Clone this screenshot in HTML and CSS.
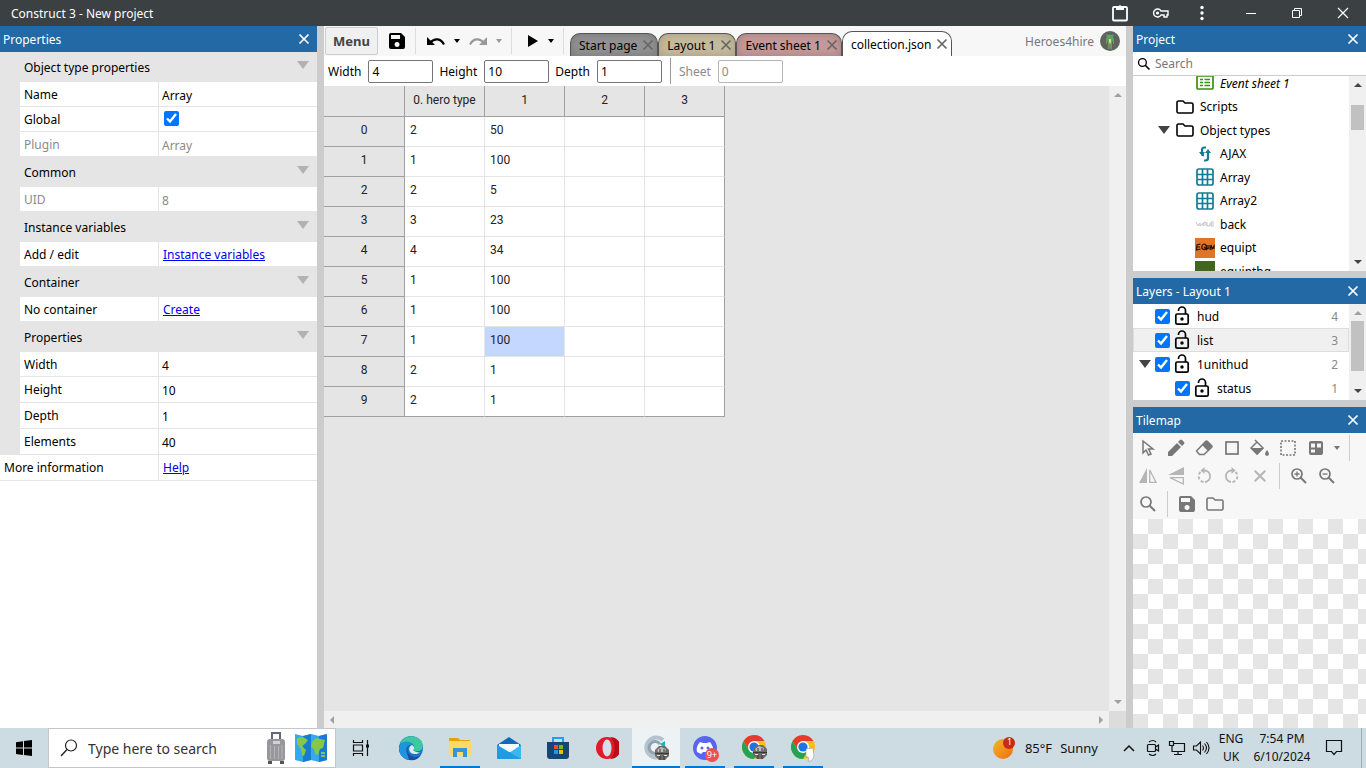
FILE: index.html
```html
<!DOCTYPE html>
<html lang="en">
<head>
  <meta charset="UTF-8">
  <title>Construct 3 - New project</title>
  <meta name="viewport" content="width=device-width, initial-scale=1.0">
  <link rel="stylesheet" href="styles.css">
</head>
<body>
  <svg class="symbols" width="0" height="0" aria-hidden="true">
    <symbol id="close" viewBox="0 0 12 12"><path d="M1.500 1.500l9 9m0-9l-9 9" fill="none" stroke="currentColor" stroke-width="1.700"/></symbol>
    <symbol id="down" viewBox="0 0 12 12"><path d="M0 2h12l-6 8z" fill="currentColor"/></symbol>
    <symbol id="save" viewBox="0 0 18 18"><path d="M3 1h10l4 4v10a2 2 0 0 1-2 2H3a2 2 0 0 1-2-2V3a2 2 0 0 1 2-2zm0 2v4h9V3zm6 7a2.500 2.500 0 1 0 .1 0z" fill="currentColor" fill-rule="evenodd"/></symbol>
    <symbol id="folder" viewBox="0 0 18 18"><path d="M1 4.500a1.500 1.500 0 0 1 1.500-1.500H7l2 2h6.500A1.500 1.500 0 0 1 17 6.500v7a1.500 1.500 0 0 1-1.500 1.500h-13A1.500 1.500 0 0 1 1 13.500z" fill="none" stroke="currentColor" stroke-width="1.600"/></symbol>
    <symbol id="undo" viewBox="0 0 20 14"><path d="M1 3l8 8H1z" fill="currentColor"/><path d="M4.500 8.500c4-5 10.500-4 13.500 2" fill="none" stroke="currentColor" stroke-width="2.200"/></symbol>
    <symbol id="lock" viewBox="0 0 16 20"><rect x="1.800" y="8" width="12.400" height="10.200" rx="1.500" fill="none" stroke="currentColor" stroke-width="1.700"/><path d="M4.500 5V4.500a3.500 3.500 0 0 1 7 0V8" fill="none" stroke="currentColor" stroke-width="1.700"/><circle cx="8" cy="13" r="1.700" fill="currentColor"/></symbol>
    <symbol id="array" viewBox="0 0 18 18"><rect x="1" y="1" width="16" height="16" rx="2" fill="none" stroke="currentColor" stroke-width="1.700"/><path d="M6.500 1v16M11.500 1v16M1 6.500h16M1 11.500h16" stroke="currentColor" stroke-width="1.700"/></symbol>
    <symbol id="zoom" viewBox="0 0 18 18"><circle cx="7" cy="7" r="5" fill="none" stroke="currentColor" stroke-width="1.700"/><path d="M10.500 10.500l5.500 5.500" stroke="currentColor" stroke-width="2"/></symbol>
    <symbol id="rotate" viewBox="0 0 18 18"><path d="M8 3.500h2a5.800 5.800 0 0 1 0 11.500" fill="none" stroke="currentColor" stroke-width="1.800"/><path d="M8.500 15A5.800 5.800 0 0 1 5.500 5" fill="none" stroke="currentColor" stroke-width="1.800" stroke-dasharray="3 2"/><path d="M9.500 0v7L5.500 3.500z" fill="currentColor"/></symbol>
    <symbol id="chrome" viewBox="0 0 26 26"><circle cx="13" cy="13" r="12" fill="#fbc116"/><path d="M2.600 7A12 12 0 0 1 23.400 7H13l-5.200 9z" fill="#e33b2e"/><path d="M2.600 7A12 12 0 0 0 13 25l5.200-9H7.800z" fill="#23a455"/><circle cx="13" cy="13" r="6" fill="#fff"/><circle cx="13" cy="13" r="4.600" fill="#1a73e8"/></symbol>
    <symbol id="robot" viewBox="0 0 16 16"><path d="M1 5l4-4h6l4 4v6l-4 4H5l-4-4z" fill="#6d6a68"/><path d="M3 5l4-3 5 2-1 3H4z" fill="#bdbdbd"/><path d="M1 8.500h14M6 4v3M10 4v3M6 11v4M10 11v4" stroke="#3a3735"/><path d="M3 10.500h3m4 0h3" stroke="#ddd"/></symbol>
  </svg>

  <header class="titlebar">
    <span class="app-name">Construct 3 - New project</span>
    <button aria-label="Clipboard"><svg width="18" height="18" viewBox="0 0 18 18"><rect x="2" y="3" width="14" height="13.500" rx="1" fill="none" stroke="currentColor" stroke-width="1.800"/><path d="M5 2h2.500a1.800 1.800 0 0 1 3 0H13v4H5z" fill="currentColor"/></svg></button>
    <button aria-label="Passwords"><svg width="18" height="12" viewBox="0 0 18 12"><path d="M9 4a4 4 0 1 0 0 4h3v2h3V8h1V4z" fill="none" stroke="currentColor" stroke-width="1.400"/><circle cx="5.500" cy="6" r="1.600" fill="currentColor"/></svg></button>
    <button aria-label="More"><svg width="6" height="16" viewBox="0 0 6 16" fill="currentColor"><circle cx="3" cy="2.500" r="1.700"/><circle cx="3" cy="8" r="1.700"/><circle cx="3" cy="13.500" r="1.700"/></svg></button>
    <button class="win" aria-label="Minimize"><svg width="12" height="12"><path d="M1 6.500h10" stroke="currentColor"/></svg></button>
    <button class="win" aria-label="Restore"><svg width="12" height="12" fill="none" stroke="currentColor"><path d="M1.500 3.500h7v7h-7zM3.500 3.500v-2h7v7h-2"/></svg></button>
    <button class="win" aria-label="Close"><svg width="12" height="12"><path d="M1 1l10 10m0-10L1 11" stroke="currentColor" stroke-width="1.200"/></svg></button>
  </header>

  <div class="workspace">
    <aside class="properties">
      <div class="panel-head"><h2>Properties</h2><button aria-label="Close properties"><svg width="12" height="12"><use href="#close"/></svg></button></div>
      <div class="prop-groups">
        <div class="group">Object type properties <svg width="12" height="12"><use href="#down"/></svg></div>
        <div class="prop"><label for="p-name">Name</label><input id="p-name" type="text" value="Array"></div>
        <div class="prop"><label for="p-global">Global</label><span class="tick"><input id="p-global" type="checkbox" checked></span></div>
        <div class="prop off"><label for="p-plugin">Plugin</label><input id="p-plugin" type="text" value="Array" disabled></div>
        <div class="group">Common <svg width="12" height="12"><use href="#down"/></svg></div>
        <div class="prop off"><label for="p-uid">UID</label><input id="p-uid" type="text" value="8" disabled></div>
        <div class="group">Instance variables <svg width="12" height="12"><use href="#down"/></svg></div>
        <div class="prop"><span class="name">Add / edit</span><a href="#">Instance variables</a></div>
        <div class="group">Container <svg width="12" height="12"><use href="#down"/></svg></div>
        <div class="prop"><span class="name">No container</span><a href="#">Create</a></div>
        <div class="group">Properties <svg width="12" height="12"><use href="#down"/></svg></div>
        <div class="prop"><label for="p-width">Width</label><input id="p-width" type="text" value="4"></div>
        <div class="prop tall"><label for="p-height">Height</label><input id="p-height" type="text" value="10"></div>
        <div class="prop tall"><label for="p-depth">Depth</label><input id="p-depth" type="text" value="1"></div>
        <div class="prop tall"><label for="p-elements">Elements</label><input id="p-elements" type="text" value="40"></div>
      </div>
      <div class="prop tall more"><span class="name">More information</span><a href="#">Help</a></div>
    </aside>

    <main class="editor">
      <div class="toolbar">
        <button class="menu">Menu</button>
        <button class="save" aria-label="Save"><svg width="18" height="18"><use href="#save"/></svg></button>
        <div class="tool-group history">
          <button aria-label="Undo"><svg width="20" height="14"><use href="#undo"/></svg></button>
          <button aria-label="Undo list"><svg width="6" height="6"><use href="#down"/></svg></button>
          <button class="dim" aria-label="Redo"><svg class="flip" width="20" height="14"><use href="#undo"/></svg></button>
          <button class="dim" aria-label="Redo list"><svg width="6" height="6"><use href="#down"/></svg></button>
        </div>
        <div class="tool-group preview">
          <button aria-label="Preview"><svg width="10" height="12"><path d="M0 0v12l10-6z"/></svg></button>
          <button aria-label="Preview options"><svg width="6" height="6"><use href="#down"/></svg></button>
        </div>
        <div class="tabs">
          <div class="tab start"><a href="#">Start page</a><button aria-label="Close tab"><svg width="12" height="12"><use href="#close"/></svg></button></div>
          <div class="tab layout"><a href="#">Layout 1</a><button aria-label="Close tab"><svg width="12" height="12"><use href="#close"/></svg></button></div>
          <div class="tab event"><a href="#">Event sheet 1</a><button aria-label="Close tab"><svg width="12" height="12"><use href="#close"/></svg></button></div>
          <div class="tab current"><a href="#">collection.json</a><button aria-label="Close tab"><svg width="12" height="12"><use href="#close"/></svg></button></div>
        </div>
        <a class="user" href="#">Heroes4hire
          <svg width="20" height="20" viewBox="0 0 20 20"><circle cx="10" cy="10" r="10" fill="#5f625f"/><path d="M6 3l2 1q2-1 4 0l2-1-1 3 1 2v5h-1V9l-1 3v6h-1.500L10 13l-.5 5H8v-6L7 9v4H6V8l1-2z" fill="#5fa35f"/><path d="M9 8h2v3l-1 2-1-2z" fill="#e6cfae"/><path d="M8 12h1v3H8zM11 12h1v3h-1z" fill="#a8795c"/></svg>
        </a>
      </div>

      <form class="size-bar">
        <label for="a-width">Width</label><input id="a-width" type="text" value="4">
        <label for="a-height">Height</label><input id="a-height" type="text" value="10">
        <label for="a-depth">Depth</label><input id="a-depth" type="text" value="1">
        <span class="rule"></span>
        <label class="off" for="a-sheet">Sheet</label><input id="a-sheet" type="text" value="0" disabled>
      </form>

      <div class="grid-area">
        <div class="grid-scroll">
          <table>
            <colgroup><col class="index"><col><col><col><col></colgroup>
            <thead>
              <tr><th></th><th>0. hero type</th><th>1</th><th>2</th><th>3</th></tr>
            </thead>
            <tbody>
              <tr><th>0</th><td>2</td><td>50</td><td></td><td></td></tr>
              <tr><th>1</th><td>1</td><td>100</td><td></td><td></td></tr>
              <tr><th>2</th><td>2</td><td>5</td><td></td><td></td></tr>
              <tr><th>3</th><td>3</td><td>23</td><td></td><td></td></tr>
              <tr><th>4</th><td>4</td><td>34</td><td></td><td></td></tr>
              <tr><th>5</th><td>1</td><td>100</td><td></td><td></td></tr>
              <tr><th>6</th><td>1</td><td>100</td><td></td><td></td></tr>
              <tr><th>7</th><td>1</td><td class="selected">100</td><td></td><td></td></tr>
              <tr><th>8</th><td>2</td><td>1</td><td></td><td></td></tr>
              <tr><th>9</th><td>2</td><td>1</td><td></td><td></td></tr>
            </tbody>
          </table>
        </div>
        <div class="vbar idle"><i class="up"></i><i class="dn"></i></div>
        <div class="hbar"><i class="lt"></i><i class="rt"></i></div>
        <div class="corner"></div>
      </div>
    </main>

    <aside class="side">
      <section class="project">
        <div class="panel-head"><h2>Project</h2><button aria-label="Close project"><svg width="12" height="12"><use href="#close"/></svg></button></div>
        <div class="search"><svg width="14" height="14"><use href="#zoom" width="14" height="14"/></svg><input type="text" placeholder="Search" aria-label="Search"></div>
        <div class="scroller">
          <ul class="tree">
            <li class="deep"><svg class="green" width="18" height="18" viewBox="0 0 18 18"><rect x="1" y="2" width="16" height="13" rx="1" fill="none" stroke="currentColor" stroke-width="1.700"/><path d="M4 5.500h3m1.500 0H14M4 8.500h3m1.500 0H14M4 11.500h3m1.500 0H14" stroke="currentColor" stroke-width="1.600"/></svg><em>Event sheet 1</em></li>
            <li><svg width="18" height="18"><use href="#folder"/></svg>Scripts</li>
            <li class="open"><svg class="arrow" width="12" height="12"><use href="#down"/></svg><svg width="18" height="18"><use href="#folder"/></svg>Object types</li>
            <li class="deep"><svg class="teal" width="18" height="18" viewBox="0 0 18 18"><path d="M10 2.500H8.500Q6 2.500 6 5v3q0 2 2 2.500M8 15.500h1.500q2.500 0 2.500-2.500V7" fill="none" stroke="currentColor" stroke-width="2.200"/><path d="M3 7h6l-3 4zM9 8h6l-3-4z" fill="currentColor"/></svg>AJAX</li>
            <li class="deep"><svg class="teal" width="18" height="18"><use href="#array"/></svg>Array</li>
            <li class="deep"><svg class="teal" width="18" height="18"><use href="#array"/></svg>Array2</li>
            <li class="deep"><svg width="18" height="18" viewBox="0 0 18 18" fill="none" stroke="#c4c4c4"><path d="M0 7l2 4 2-3m0 0v3l3-3v3m1 0V7l2 1v3m1-4v4h3V8m1 3V7h3m-3 2h3m-3 2h3"/></svg>back</li>
            <li class="deep"><svg class="sprite" width="20" height="20" viewBox="0 0 20 20"><path fill="#e27525" d="M0 0h20v20H0z"/><path d="M5.500 6L2 7l-.5 5 4-1M2 9h3m4-3c-3 1-3 5 0 5.500s3-5.500 0-5.500m0 3l3 3m0-5v4l2-1V7m1 5l1-5 1 4 2-3v3" fill="none" stroke="#241208" stroke-width="1.200"/></svg>equipt</li>
            <li class="deep"><svg class="sprite" width="20" height="20"><path fill="#42651f" d="M0 0h20v20H0z"/></svg>equiptbg</li>
          </ul>
          <div class="vbar"><i class="up"></i><b></b><i class="dn"></i></div>
        </div>
      </section>

      <section class="layers">
        <div class="panel-head"><h2>Layers - Layout 1</h2><button aria-label="Close layers"><svg width="12" height="12"><use href="#close"/></svg></button></div>
        <div class="scroller">
          <ul class="layer-list">
            <li><input id="l4" type="checkbox" checked><svg width="16" height="20"><use href="#lock"/></svg><label for="l4">hud</label><span>4</span></li>
            <li class="active"><input id="l3" type="checkbox" checked><svg width="16" height="20"><use href="#lock"/></svg><label for="l3">list</label><span>3</span></li>
            <li class="open"><svg class="arrow" width="12" height="12"><use href="#down"/></svg><input id="l2" type="checkbox" checked><svg width="16" height="20"><use href="#lock"/></svg><label for="l2">1unithud</label><span>2</span></li>
            <li class="child"><input id="l1" type="checkbox" checked><svg width="16" height="20"><use href="#lock"/></svg><label for="l1">status</label><span>1</span></li>
          </ul>
          <div class="vbar top"><i class="up"></i><b></b><i class="dn"></i></div>
        </div>
      </section>

      <section class="tilemap">
        <div class="panel-head"><h2>Tilemap</h2><button aria-label="Close tilemap"><svg width="12" height="12"><use href="#close"/></svg></button></div>
        <div class="tile-tools">
          <div class="tile-row">
            <button aria-label="Select"><svg width="18" height="18" viewBox="0 0 18 18"><path d="M4 2v12l3-3 2.500 5 2.500-1-2.500-5H14z" fill="none" stroke="currentColor" stroke-width="1.500"/></svg></button>
            <button aria-label="Draw"><svg width="18" height="18" viewBox="0 0 18 18" fill="currentColor"><path d="M1 17v-4l9-9 4 4-9 9zM11 3l2-2q1-1 2 0l2 2q1 1 0 2l-2 2z"/></svg></button>
            <button aria-label="Erase"><svg width="18" height="18" viewBox="0 0 18 18"><path d="M7 6l4.500-4 5.500 5-4 5z" fill="currentColor"/><path d="M1.500 12l9-9.500q1-1 2 0l4 4q1 1 0 2L9 15.500H4.500z" fill="none" stroke="currentColor" stroke-width="1.500"/></svg></button>
            <button aria-label="Rectangle"><svg width="18" height="18"><rect x="3" y="3" width="12" height="12" fill="none" stroke="currentColor" stroke-width="1.700"/></svg></button>
            <button aria-label="Fill"><svg width="20" height="18" viewBox="0 0 20 18"><path d="M5 1l8 8-6 6-6-6 6-6" fill="none" stroke="currentColor" stroke-width="1.500"/><path d="M1 9h13l-7 7zM17 11q-4 5 0 6 4-1 0-6z" fill="currentColor"/></svg></button>
            <button aria-label="Selection"><svg width="18" height="18"><rect x="2" y="2" width="14" height="14" fill="none" stroke="currentColor" stroke-width="1.600" stroke-dasharray="2 1.500"/></svg></button>
            <button aria-label="Tiles"><svg width="18" height="18" viewBox="0 0 18 18"><path d="M4 2h10a2 2 0 0 1 2 2v10a2 2 0 0 1-2 2H4a2 2 0 0 1-2-2V4a2 2 0 0 1 2-2zm0 2.500v4h4v-4zm6 0v4h4v-4zm-6 6v3h4v-3z" fill="currentColor" fill-rule="evenodd"/></svg></button>
            <button class="small" aria-label="Tile options"><svg width="6" height="6"><use href="#down"/></svg></button>
            <span class="rule"></span>
          </div>
          <div class="tile-row">
            <button class="dim" aria-label="Mirror"><svg width="18" height="18" viewBox="0 0 18 18"><path d="M8 1v15H0z" fill="currentColor"/><path d="M10.700 3v12.300H17z" fill="none" stroke="currentColor" stroke-width="1.300"/></svg></button>
            <button class="dim" aria-label="Flip"><svg width="18" height="18" viewBox="0 0 18 18"><path d="M17 0v8H1z" fill="currentColor"/><path d="M3 10.700h13.300V17z" fill="none" stroke="currentColor" stroke-width="1.300"/></svg></button>
            <button class="dim" aria-label="Rotate left"><svg width="18" height="18"><use href="#rotate"/></svg></button>
            <button class="dim" aria-label="Rotate right"><svg class="flip" width="18" height="18"><use href="#rotate"/></svg></button>
            <button class="dim" aria-label="Clear"><svg width="14" height="14"><use href="#close"/></svg></button>
            <span class="rule"></span>
            <button aria-label="Zoom in"><svg width="18" height="18"><use href="#zoom"/><path d="M4.500 7h5M7 4.500v5" stroke="currentColor" stroke-width="1.300"/></svg></button>
            <button aria-label="Zoom out"><svg width="18" height="18"><use href="#zoom"/><path d="M4.500 7h5" stroke="currentColor" stroke-width="1.300"/></svg></button>
          </div>
          <div class="tile-row">
            <button aria-label="Reset zoom"><svg width="18" height="18"><use href="#zoom"/></svg></button>
            <span class="rule"></span>
            <button aria-label="Save tiles"><svg width="18" height="18"><use href="#save"/></svg></button>
            <button aria-label="Load tiles"><svg width="18" height="18"><use href="#folder"/></svg></button>
          </div>
        </div>
        <div class="checker"></div>
      </section>
    </aside>
  </div>

  <footer class="taskbar">
    <button class="start-btn" aria-label="Start"><svg width="16" height="16" viewBox="0 0 16 16"><path d="M0 2.200l7-1v6.300H0zM8 1.100L16 0v7.500H8zM0 8.500h7v6.400l-7-1zM8 8.500h8V16l-8-1.100z"/></svg></button>
    <div class="find">
      <svg width="18" height="18" viewBox="0 0 18 18"><circle cx="11" cy="6.500" r="5.500" fill="none" stroke="#222" stroke-width="1.200"/><path d="M7 10.500L1 17" stroke="#222" stroke-width="1.400"/></svg>
      <input type="text" placeholder="Type here to search" aria-label="Type here to search">
      <svg width="20" height="32" viewBox="0 0 20 32"><path d="M6 8V1h8v7" fill="none" stroke="#66667a" stroke-width="2"/><rect x="1" y="7" width="18" height="22" rx="3" fill="#98989c"/><path d="M4.500 13v14M8.500 14v13M12.500 14v13M16 13v14" stroke="#b4b4b8"/><path d="M7 9h7v3H7z" fill="#d8cdd8"/><path d="M2 29h4v3H2zM14 29h4v3h-4z" fill="#555"/></svg>
      <svg width="34" height="30" viewBox="0 0 34 30"><path d="M1 1l8 2 8-2 8 2 8-2v26l-8 2-8-2-8 2-8-2z" fill="#36a9ee"/><path d="M9 3l8-2v26l-8 2zM25 3l8-2v26l-8 2z" fill="#177bd0"/><path d="M3 5l6-1 5 3-3 4-3 2 4 4-2 6-2-1-1-6-4-5zM18 9l4-4 9 2-2 8-3 1-2 6-3-1-1-5-3-2z" fill="#83c846"/><path d="M27 19h4v2h-4zM27 22h4v2h-4z" fill="#83c846"/></svg>
    </div>
    <nav class="apps">
      <button aria-label="Task view"><svg width="18" height="16" viewBox="0 0 18 16" fill="none" stroke="#111" stroke-width="1.200"><path d="M1.500 0v2.500h9V0M1.500 5h9v6h-9zM1.500 16v-2.500h9V16M15.500 0v16"/><path d="M14 4.500h3v3h-3z" fill="#111" stroke="none"/></svg></button>
      <button aria-label="Edge"><svg width="26" height="26" viewBox="0 0 26 26"><circle cx="13" cy="13" r="12" fill="#1575ca"/><path d="M2 10C4 2 12 0 18 2c6 2 8 8 6 12-2 3-8 3-9 0 3-3-1-7-5-7-4 0-7 1-8 3z" fill="#3cc8a0"/><path d="M1 14C1 8 8 5 13 10c-4 1-5 5-2 9 3 4 8 4 12 1-5 9-21 6-22-6z" fill="#174f9b"/><path d="M1 13C2 6 11 4 15 10c-5-1-8 3-6 8l2 7C4 24 1 18 1 13z" fill="#2093df"/><path d="M14 10c-3 1-4 5-1 8 3 2 7 1 10-1-2 1-6 0-8-2 2-1 1-4-1-5z" fill="#dcebf2"/></svg></button>
      <button class="running" aria-label="Files"><svg width="24" height="22" viewBox="0 0 24 22"><path d="M1 1h9l2 2h10v16H1z" fill="#e2a30c"/><path d="M1 4h22v15H1z" fill="#ffd968"/><path d="M5 20V11h14v9h-4v-5H9v5z" fill="#3694dc"/></svg></button>
      <button aria-label="Mail"><svg width="26" height="24" viewBox="0 0 26 24"><path d="M1 9L13 1l12 8v14H1z" fill="#116abb"/><path d="M3 8h20v8H3z" fill="#f6fbff"/><path d="M1 9l12 8 12-8v14H1z" fill="#36b8f0"/><path d="M1 9l24 14H1z" fill="#1e9be2"/></svg></button>
      <button aria-label="Store"><svg width="24" height="24" viewBox="0 0 24 24"><path d="M7 7V2h10v5" fill="none" stroke="#24a0e7" stroke-width="2"/><path d="M1 6h22v14q0 3-3 3H4q-3 0-3-3z" fill="#194575"/><path d="M8 9h4v4H8z" fill="#f25022"/><path d="M13 9h4v4h-4z" fill="#7fba00"/><path d="M8 14h4v4H8z" fill="#00a4ef"/><path d="M13 14h4v4h-4z" fill="#ffb900"/></svg></button>
      <button aria-label="Opera"><svg width="24" height="24" viewBox="0 0 24 24"><circle cx="12" cy="12" r="11" fill="#e31a2a"/><path d="M15 1a11 11 0 0 1 0 22c6-4 6-18 0-22z" fill="#b80e19"/><ellipse cx="12" cy="12" rx="4.500" ry="8.500" fill="#d3e0e7"/></svg></button>
      <button class="running current" aria-label="Construct"><svg width="28" height="28" viewBox="0 0 28 28"><path d="M21 6a10 10 0 1 0 0 15" fill="none" stroke="#b4c2ce" stroke-width="4"/><path d="M18 10a6 6 0 1 0 0 7" fill="none" stroke="#8fa3b4" stroke-width="3"/><path d="M23 7v8l-5-5z" fill="#18b9b3"/><use href="#robot" x="12" y="11" width="16" height="16"/></svg></button>
      <button class="running" aria-label="Discord"><svg width="26" height="26" viewBox="0 0 26 26"><circle cx="13" cy="13" r="12" fill="#5865f2"/><path d="M8 7l3 1h4l3-1c3 4 4 8 3 10l-4 2-2-2h-4l-2 2-4-2c-1-3 0-7 3-10z" fill="#fff"/><circle cx="10" cy="13" r="1.500" fill="#5865f2"/><circle cx="16" cy="13" r="1.500" fill="#5865f2"/></svg><span class="badge">9+</span></button>
      <button class="running" aria-label="Chrome"><svg width="28" height="28" viewBox="0 0 28 28"><use href="#chrome" x="1" width="26" height="26"/><use href="#robot" x="12" y="10" width="16" height="16"/></svg></button>
      <button class="running" aria-label="Chrome profile"><svg width="28" height="28" viewBox="0 0 28 28"><use href="#chrome" x="1" width="26" height="26"/><path d="M17 15l7-1 1 9-3 4h-3l1-3-3-2z" fill="#fff" stroke="#8a8a8a" stroke-width=".5"/></svg></button>
    </nav>
    <div class="tray">
      <button class="weather"><svg width="24" height="24" viewBox="0 0 24 24"><defs><linearGradient id="sun" x1="0" y1="0" x2="1" y2="1"><stop offset="0" stop-color="#efb92a"/><stop offset="1" stop-color="#f26c0d"/></linearGradient></defs><circle cx="10" cy="13" r="10" fill="url(#sun)"/><circle cx="16" cy="7" r="6" fill="#c42b1c"/></svg><span class="alert">1</span><span>85°F</span><span>Sunny</span></button>
      <button class="sys" aria-label="Hidden icons"><svg width="14" height="14"><path d="M2 10l5-5 5 5" fill="none" stroke="#111" stroke-width="1.500"/></svg></button>
      <button class="sys" aria-label="Meet now"><svg width="14" height="18" fill="none" stroke="#111" stroke-width="1.200"><path d="M3 3q4-3 7 0M3 15q4 3 7 0M1.500 6.500q0-1 1-1h6q1 0 1 1v5q0 1-1 1h-6q-1 0-1-1zM9.500 8l3-2v6l-3-2"/></svg></button>
      <button class="sys" aria-label="Network"><svg width="18" height="16" fill="none" stroke="#111" stroke-width="1.200"><path d="M5 3.500h11.500v8H4V6M10 12v3M6 14.500h8M1.500 1.500h4v4h-4z"/></svg></button>
      <button class="sys" aria-label="Volume"><svg width="18" height="16" fill="none" stroke="#111" stroke-width="1.100"><path d="M1.500 6h3l4-4v12l-4-4h-3zM10.500 5.500q2 2.500 0 5M12.500 3.500q4 4.500 0 9M14.500 2q5 6 0 12"/></svg></button>
      <button class="lang">ENG<br>UK</button>
      <button class="clock">7:54 PM<br>6/10/2024</button>
      <button class="note" aria-label="Notifications"><svg width="18" height="18"><path d="M1.500 1.500h15v11h-5l-2.500 3-2.500-3h-5z" fill="none" stroke="#111" stroke-width="1.200"/></svg></button>
    </div>
  </footer>
</body>
</html>
```
FILE: styles.css
```css
* {
  margin: 0;
  padding: 0;
  box-sizing: border-box;
}

body {
  font-family: "Noto Sans", sans-serif;
  font-size: 12px;
  color: #111;
  background-color: #ccc;
  display: flex;
  flex-direction: column;
  height: 100vh;
  overflow: hidden;
}

button {
  border: none;
  background: none;
  font: inherit;
  color: inherit;
  display: flex;
  align-items: center;
  justify-content: center;
}

input {
  font: inherit;
  color: inherit;
  border: none;
  min-width: 0;
}

input[type="checkbox"] {
  width: 15px;
  height: 15px;
  accent-color: #0075ff;
  flex: none;
}

svg {
  flex: none;
  display: block;
}

ul {
  list-style: none;
}

.symbols {
  position: absolute;
}

.flip {
  transform: scaleX(-1);
}

/* title bar */
.titlebar {
  flex: none;
  height: 26px;
  display: flex;
  align-items: center;
  background-color: #3b4043;
  color: #fff;
}

.app-name {
  flex: 1;
  padding-left: 11px;
}

.titlebar button {
  width: 41px;
  height: 26px;
}

.titlebar .win {
  width: 46px;
}

.titlebar .win:nth-of-type(4) {
  margin-left: 6px;
}

/* panels */
.workspace {
  flex: 1;
  min-height: 0;
  display: flex;
  gap: 7px;
}

.panel-head {
  flex: none;
  height: 26px;
  padding: 0 7px 0 3px;
  display: flex;
  align-items: center;
  justify-content: space-between;
  background-color: #2269a6;
  color: #fff;
}

h2 {
  font-size: 12px;
  font-weight: normal;
}

/* properties */
.properties {
  width: 317px;
  flex: none;
  background-color: #fff;
}

.prop-groups {
  padding-left: 20px;
  background-color: #e5e5e5;
}

.group {
  height: 30px;
  padding: 0 8px 0 4px;
  display: flex;
  align-items: center;
  justify-content: space-between;
  color: #000;
}

.group svg {
  color: #b2b2b2;
  margin-bottom: 4px;
}

.prop {
  height: 25px;
  display: grid;
  grid-template-columns: 139px 1fr;
  align-items: stretch;
  line-height: 25px;
  background-color: #fff;
  border-bottom: 1px solid #e5e5e5;
  color: #000;
}

.prop.tall {
  height: 26px;
}

.prop.more {
  grid-template-columns: 159px 1fr;
}

.prop label, .prop .name {
  height: 24px;
  padding-left: 4px;
  border-right: 1px solid #e5e5e5;
}

.prop.tall label, .prop.tall .name {
  height: 25px;
}

.prop input[type="text"], .prop a, .tick {
  padding-left: 3px;
  background: none;
}

.prop input[type="text"] {
  padding-top: 1px;
}

.prop a {
  padding-left: 4px;
}

.tick input {
  display: block;
  margin: 4px 0 0 2px;
}

.prop.off {
  color: #8a8a8a;
}

a {
  color: #0000ee;
}

/* editor */
.editor {
  flex: 1;
  min-width: 0;
  display: flex;
  flex-direction: column;
}

.toolbar {
  flex: none;
  height: 30px;
  display: flex;
  background-color: #f7f7f7;
  color: #000;
}

.menu {
  width: 53px;
  height: 28px;
  margin: 1px 0 0 1px;
  border: 1px solid #ccc;
  border-radius: 2px;
  background-color: #f0f0f0;
  color: #444;
  font-weight: bold;
  font-size: 13px;
}

.save {
  width: 37px;
}

.tool-group {
  height: 26px;
  margin-top: 2px;
  display: flex;
  border-left: 1px solid #ddd;
}

.history {
  gap: 8px;
  padding: 0 9px 0 10px;
}

.preview {
  gap: 10px;
  padding: 0 9px 0 16px;
  border-right: 1px solid #ddd;
}

.history .dim {
  color: #999;
}

.tabs {
  flex: 1;
  display: flex;
  align-items: flex-end;
  padding-left: 6px;
}

.tab {
  height: 23px;
  padding: 0 3px 0 8px;
  display: flex;
  align-items: center;
  gap: 5px;
  border: 1px solid #555;
  border-bottom: none;
  border-radius: 10px 10px 0 0;
}

.tab a {
  color: #000;
  text-decoration: none;
}

.tab button {
  color: #666;
}

.tab.start {
  background-color: #929292;
  box-shadow: inset 0 0 10px #777;
}

.tab.layout {
  background-color: #c5bb9d;
  box-shadow: inset 0 0 10px #a79d7d;
}

.tab.event {
  background-color: #c59a9a;
  box-shadow: inset 0 0 10px #a67d7d;
}

.tab.current {
  height: 25px;
  background-color: #fff;
}

.user {
  display: flex;
  align-items: center;
  gap: 6px;
  padding-right: 6px;
  color: #777;
  text-decoration: none;
}

.size-bar {
  flex: none;
  height: 30px;
  display: flex;
  align-items: center;
  padding-left: 4px;
  background-color: #fff;
  color: #000;
}

.size-bar label {
  margin-right: 7px;
}

.size-bar input {
  width: 65px;
  height: 23px;
  padding-left: 3px;
  margin-right: 6px;
  border: 1px solid #767676;
  border-radius: 2px;
  background-color: #fff;
}

.size-bar .off, .size-bar input:disabled {
  color: #8a8a8a;
}

.size-bar input:disabled {
  border-color: #b5b5b5;
}

.size-bar .rule {
  width: 1px;
  height: 26px;
  margin: 0 8px 0 2px;
  background-color: #999;
}

.grid-area {
  flex: 1;
  min-height: 0;
  display: grid;
  grid-template-columns: 1fr 17px;
  grid-template-rows: 1fr 17px;
  background-color: #e5e5e5;
}

.grid-scroll {
  overflow: hidden;
}

table {
  width: 401px;
  table-layout: fixed;
  border-collapse: separate;
  border-spacing: 0;
  font-family: Roboto, sans-serif;
  color: #222;
}

.index {
  width: 81px;
}

th, td {
  height: 30px;
  font-weight: normal;
  line-height: 16px;
  padding-bottom: 3px;
}

th {
  background-color: #e5e5e5;
  border-right: 1px solid #a0a0a0;
  border-bottom: 1px solid #a0a0a0;
  text-align: center;
}

thead th {
  height: 31px;
}

td {
  padding-left: 5px;
  background-color: #fff;
  border-right: 1px solid #e5e5e5;
  border-bottom: 1px solid #e5e5e5;
}

td:last-child {
  border-right-color: #a0a0a0;
}

tr:last-child td {
  border-bottom-color: #a0a0a0;
}

td.selected {
  background-color: #c4d8ff;
}

/* scroll bars */
.vbar, .hbar {
  display: flex;
  align-items: center;
  justify-content: space-between;
  background-color: #f0f0f0;
}

.vbar {
  width: 17px;
  flex-direction: column;
  padding: 7px 0;
}

.hbar {
  padding: 0 6px;
}

.vbar i, .hbar i {
  border: 4px solid transparent;
}

.vbar .up {
  border-top: none;
  border-bottom-color: #444;
}

.vbar .dn {
  border-bottom: none;
  border-top-color: #444;
}

.vbar.idle .up, .vbar.top .up {
  border-bottom-color: #a0a0a0;
}

.vbar.idle .dn {
  border-top-color: #a0a0a0;
}

.hbar .lt {
  border-left: none;
  border-right-color: #a0a0a0;
}

.hbar .rt {
  border-right: none;
  border-left-color: #a0a0a0;
}

.vbar b {
  width: 13px;
  height: 25px;
  margin: 18px 0 auto;
  background-color: #c1c1c1;
}

.vbar.top b {
  height: 50px;
  margin-top: 6px;
}

.corner {
  background-color: #dcdcdc;
}

/* right side */
.side {
  width: 233px;
  flex: none;
  display: flex;
  flex-direction: column;
  gap: 7px;
  color: #000;
}

.project {
  flex: none;
  height: 245px;
  display: flex;
  flex-direction: column;
  background-color: #fff;
}

.search {
  flex: none;
  height: 24px;
  display: flex;
  align-items: center;
  gap: 4px;
  padding-left: 4px;
  border-bottom: 1px solid #ccc;
}

.search input {
  flex: 1;
}

.search input::placeholder {
  color: #777;
}

.scroller {
  flex: 1;
  min-height: 0;
  display: grid;
  grid-template-columns: 1fr 17px;
  overflow: hidden;
  background-color: #fff;
}

.tree {
  height: 195px;
  margin-top: -5px;
  display: grid;
  grid-auto-rows: 24px 23px;
}

.tree li {
  display: flex;
  align-items: center;
  gap: 6px;
  padding-left: 43px;
}

.tree .open {
  padding-left: 25px;
}

.tree .deep {
  padding-left: 63px;
}

.tree .sprite {
  margin: 0 -1px;
}

.green {
  color: #35930f;
}

.teal {
  color: #0f7d95;
}

.arrow {
  color: #444;
}

.layers {
  flex: none;
}

.layer-list {
  display: grid;
  grid-auto-rows: 24px;
}

.layer-list li {
  display: flex;
  align-items: center;
  gap: 4px;
  padding: 0 11px 0 22px;
}

.layer-list .active {
  background-color: #f0f0f0;
  border: 1px solid #ddd;
  padding: 0 10px 0 21px;
}

.layer-list .open {
  padding-left: 6px;
}

.layer-list .child {
  padding-left: 42px;
}

.layer-list label {
  flex: 1;
  padding-left: 3px;
}

.layer-list span {
  color: #8a8a8a;
}

.tilemap {
  flex: 1;
  min-height: 0;
  display: flex;
  flex-direction: column;
}

.tile-tools {
  flex: none;
  height: 86px;
  padding: 1px;
  background-color: #f7f7f7;
  color: #777;
}

.tile-row {
  height: 28px;
  display: flex;
  align-items: center;
}

.tile-row button {
  width: 28px;
  height: 28px;
}

.tile-row .small {
  width: 14px;
}

.tile-row .dim {
  color: #b5b5b5;
}

.tile-row .rule {
  width: 1px;
  height: 26px;
  margin: 0 5px;
  background-color: #ccc;
}

.checker {
  flex: 1;
  background: repeating-conic-gradient(#e5e5e5 0 25%, #fff 0 50%) 0 0 / 30px 30px;
}

/* taskbar */
.taskbar {
  flex: none;
  height: 40px;
  display: flex;
  background-color: #cddbe2;
}

.start-btn {
  width: 48px;
}

.find {
  width: 288px;
  display: flex;
  align-items: center;
  gap: 8px;
  padding: 0 7px 0 11px;
  border: 1px solid #c4c8ca;
  background-color: #fff;
}

.find input {
  flex: 1;
  padding-left: 2px;
  font-size: 14px;
}

.find input::placeholder {
  color: #333;
}

.apps {
  display: flex;
  gap: 1px;
}

.apps button {
  width: 48px;
  position: relative;
}

.apps button:first-child {
  width: 50px;
}

.apps .running::after {
  content: "";
  position: absolute;
  left: 4px;
  right: 4px;
  bottom: 0;
  height: 2px;
  background-color: #0078d7;
}

.apps .current {
  background-color: #edf2f5;
}

.apps .current::after {
  left: 0;
  right: 0;
}

.badge {
  position: absolute;
  right: 10px;
  bottom: 6px;
  width: 14px;
  height: 14px;
  border-radius: 50%;
  background-color: #ed4f55;
  color: #fff;
  font-size: 9px;
  line-height: 14px;
}

.tray {
  margin-left: auto;
  display: flex;
  margin-right: 4px;
  border-right: 1px solid #9faeb5;
}

.weather {
  position: relative;
  gap: 8px;
  font-size: 13px;
  padding-right: 19px;
}

.alert {
  position: absolute;
  left: 14px;
  top: 7px;
  color: #fff;
  font-size: 9px;
}

.sys {
  width: 24px;
}

.lang, .clock {
  width: 36px;
  line-height: 18px;
}

.clock {
  width: 66px;
}

.note {
  width: 38px;
  margin-right: 8px;
}
```
